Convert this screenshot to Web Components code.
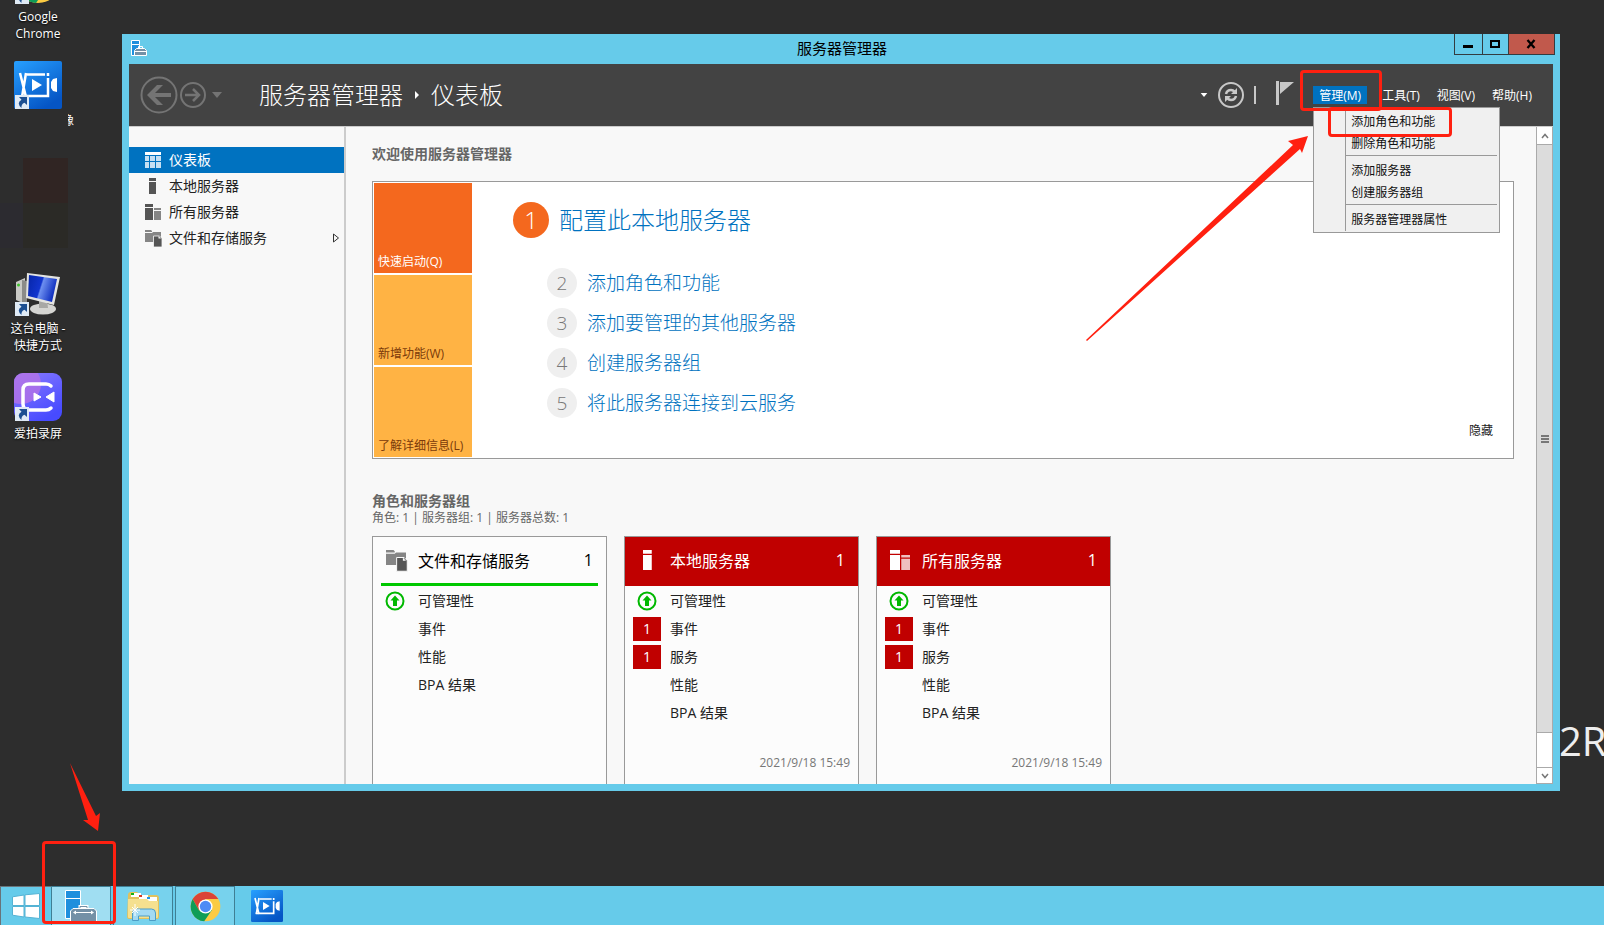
<!DOCTYPE html>
<html lang="zh-CN">
<head>
<meta charset="utf-8">
<title>服务器管理器</title>
<style>
  html, body {
    height: 100%;
    margin: 0;
    overflow: hidden;
  }
  body {
    --frame: #66cbea;
    --accent: #0072c0;
    --alert: #c00000;
    --mark: #ff2010;
    background: #2d2d2d;
    color: #222;
    font-family: "Open Sans", "Noto Sans CJK SC", sans-serif;
    font-size: 12px;
  }
</style>
</head>
<body>
<desk-top>
  <desktop-patch style="left: 23px; top: 158px; background: #302523"></desktop-patch>
  <desktop-patch style="left: 23px; top: 203px; background: #2b2a26"></desktop-patch>
  <desktop-patch style="left: -22px; top: 203px; background: #2c2b30"></desktop-patch>

  <desktop-shortcut icon="chrome" style="top: -44px">Google<br>Chrome</desktop-shortcut>
  <desktop-shortcut icon="recorder" style="top: 61px"></desktop-shortcut>
  <clipped-label style="left: 68px; top: 113px">像</clipped-label>
  <desktop-shortcut icon="computer" style="top: 268px">这台电脑 -<br>快捷方式</desktop-shortcut>
  <desktop-shortcut icon="aipai" style="top: 373px">爱拍录屏</desktop-shortcut>
  <desktop-brand>2R</desktop-brand>

  <app-window heading="服务器管理器">
    <manager-header slot="header" app="服务器管理器" page="仪表板"></manager-header>
    <nav-list slot="nav">
      <nav-item icon="dashboard" active>仪表板</nav-item>
      <nav-item icon="server">本地服务器</nav-item>
      <nav-item icon="servers">所有服务器</nav-item>
      <nav-item icon="files" more>文件和存储服务</nav-item>
    </nav-list>
    <dash-board>
      <welcome-panel></welcome-panel>
      <server-tile slot="tiles" icon="files" heading="文件和存储服务" count="1">
        <status-row ok>可管理性</status-row>
        <status-row>事件</status-row>
        <status-row>性能</status-row>
        <status-row>BPA 结果</status-row>
      </server-tile>
      <server-tile slot="tiles" icon="server" heading="本地服务器" count="1" time="2021/9/18 15:49" alert>
        <status-row ok>可管理性</status-row>
        <status-row count="1">事件</status-row>
        <status-row count="1">服务</status-row>
        <status-row>性能</status-row>
        <status-row>BPA 结果</status-row>
      </server-tile>
      <server-tile slot="tiles" icon="servers" heading="所有服务器" count="1" time="2021/9/18 15:49" alert>
        <status-row ok>可管理性</status-row>
        <status-row count="1">事件</status-row>
        <status-row count="1">服务</status-row>
        <status-row>性能</status-row>
        <status-row>BPA 结果</status-row>
      </server-tile>
    </dash-board>
  </app-window>

  <mark-box style="right: 222px; top: 70px; width: 82px; height: 41px"></mark-box>
  <mark-box style="right: 152px; top: 107px; width: 124px; height: 30px"></mark-box>
  <mark-arrow kind="up" style="right: 296px; top: 136px"></mark-arrow>

  <task-bar slot="taskbar"></task-bar>
  <mark-box style="left: 42px; bottom: 1px; width: 74px; height: 83px"></mark-box>
  <mark-arrow kind="down" style="left: 70px; bottom: 94px"></mark-arrow>
</desk-top>

<script>
const icons = {
  manager: ['0 0 32 32', `
    <path fill="#1f8fdd" stroke="#fff" d="M.5.5h15v8H.5zM.5 8.500h15v20H.5z"/>
    <path fill="none" stroke="#fff" stroke-width="3" d="M15 19v-2.500h7V19"/>
    <path fill="none" stroke="#7490a6" d="M15 19v-2.500h7V19"/>
    <path fill="#7490a6" stroke="#fff" d="M8 18.500h21l2.500 2.500v10.500h-26V21z"/>
    <path stroke="#fff" d="M9 22.500h19"/>
    <path fill="#fff" d="M8 22.500l3-2v4zM29 22.500l-3-2v4z"/>`],
  managerSmall: ['0 0 16 16', `
    <path fill="#1f8fdd" stroke="#fff" d="M.5.5h8v4h-8zM.5 4.500h8v11h-8z"/>
    <path fill="none" stroke="#fff" d="M7.500 8V6.500h4V8"/>
    <path fill="#7490a6" stroke="#fff" d="M5.500 8.500h8l2 2v5h-12v-5z"/>
    <path stroke="#fff" d="M4 11.500h11"/>`],
  dashboard: ['0 0 16 16', `
    <path fill="#fff" d="M0 0h16v3H0z"/>
    <path fill="#c6e0f3" d="M0 4h4v5H0zM5 4h5v5H5zM11 4h5v5h-5zM0 10h4v6H0zM5 10h5v6H5zM11 10h5v6h-5z"/>`],
  server: ['0 0 16 16', `<path fill="var(--ink, #555)" d="M4 0h7v3H4zM4 4h7v12H4z"/>`],
  servers: ['0 0 16 16', `
    <path fill="var(--ink, #555)" d="M0 0h8v3H0zM0 4h8v12H0z"/>
    <path fill="var(--ink, #858585)" opacity="var(--dim, 1)" d="M9 4h7v2H9zM9 7h7v9H9z"/>`],
  files: ['0 0 16 16', `
    <path fill="#858585" d="M0 0h6l1 1v1H0zM0 3h7l1-1h8v10H0z"/>
    <path fill="#555" stroke="#f8f8f8" stroke-width=".8" d="M8.500 6h6L17 8.500V17H8.500z"/>
    <path fill="#f8f8f8" d="M13.500 6v2.500H16z"/>`],
  chrome: ['0 0 48 48', `
    <circle cx="24" cy="24" r="23" fill="#fbcb43"/>
    <path fill="#db4437" d="M4.100 12.500A23 23 0 0 1 43.900 12.500H24L14 30z"/>
    <path fill="#0f9d58" d="M4.100 12.500A23 23 0 0 0 22 47L34 29.500 14 30z"/>
    <circle cx="24" cy="24" r="11" fill="#fff"/>
    <circle cx="24" cy="24" r="8.800" fill="#4c8bf5"/>`],
  recorder: ['0 0 48 48', `
    <defs><linearGradient id="g" x2=".6" y2="1">
      <stop stop-color="#27a0ff"/><stop offset="1" stop-color="#0555c5"/>
    </linearGradient></defs>
    <rect width="48" height="48" rx="2" fill="url(#g)"/>
    <path fill="none" stroke="#fff" stroke-width="2.500" d="M13 13.500h18M34 17v18H7M34 12v3"/>
    <path fill="none" stroke="#fff" stroke-width="2.500" d="M6 12l6 24M12 12L8 36"/>
    <path fill="#fff" d="M18 18l10 6-10 6zM37 21l2-3 4-1v14l-4-1-2-3z"/>`],
  aipai: ['0 0 48 48', `
    <defs><linearGradient id="a" x2=".6" y2="1">
      <stop stop-color="#8c7cff"/><stop offset="1" stop-color="#474bff"/>
    </linearGradient>
    <clipPath id="c"><rect width="48" height="48" rx="9"/></clipPath></defs>
    <g clip-path="url(#c)">
      <path fill="url(#a)" d="M0 0h48v48H0z"/>
      <circle cx="7" cy="11" r="20" fill="#b873e6" opacity=".75"/>
    </g>
    <path fill="none" stroke="#fff" stroke-width="3.500" stroke-linecap="round"
      d="M37 13Q35 11 32 11H15Q9 11 9 17v14Q9 37 15 37h17Q35 37 37 35"/>
    <path fill="#fff" stroke="#fff" stroke-linejoin="round" d="M20 20l7 4-7 4zM40 19v10l-8-5z"/>`],
  computer: ['0 0 48 48', `
    <defs><linearGradient id="s" x2="1" y2=".3">
      <stop stop-color="#0626a8"/><stop offset=".5" stop-color="#1235cf"/>
      <stop offset=".55" stop-color="#6d8ff0"/><stop offset="1" stop-color="#1030c0"/>
    </linearGradient></defs>
    <path fill="#c9c9c5" d="M2 14l9-4v26l-9-4z"/>
    <path fill="#8b8b88" d="M8 12l5 1v24l-5-2z"/>
    <circle cx="4.500" cy="17" r="1.500" fill="#3ec22e"/>
    <ellipse cx="29" cy="41" rx="13" ry="5.500" fill="#d5d5d2"/>
    <path fill="#a8a8a5" d="M25 31h8l1 9h-9z"/>
    <path fill="#e4e4e1" d="M13 5l33 4-6 28-28-7z"/>
    <path fill="url(#s)" d="M15 7l28 4-5 23-24-6z"/>`],
  shortcut: ['0 0 14 14', `
    <path fill="#dfeaf5" d="M0 0h14v14H0z"/>
    <path fill="#1c4f91" d="M4 2h8v8L9.500 7.800Q6 9 6.500 13 1 8 6.500 4.800z"/>`],
  explorer: ['0 0 34 30', `
    <path fill="#e2c25c" d="M2 4q0-3 3-3h6l3 3h16q3 0 3 3v19q0 2-2 2H3q-2 0-2-2z"/>
    <path fill="#fff" d="M5 2h10v4H5zM13 4h9v4h-9zM21 6h10v4H21z"/>
    <path fill="#12b312" d="M5 2h3v2H5z"/><path fill="#d63b25" d="M13 4h3v2h-3z"/>
    <path fill="#2196e8" d="M21 6h3v2h-3z"/>
    <path fill="#f5e08f" d="M2 8h19l2 2h9v16q0 1-1 1H3q-1 0-1-1z"/>
    <path fill="#a3daf2" stroke="#4c9dc6" d="M6.500 29.500V22q0-4 4-4h15q4 0 4 4v7.500h-6V25h-11v4.500z"/>
    <path stroke="#fff" d="M9 13v12M4 19h10M6 16l6 6M12 16l-6 6"/>`],
  start: ['0 0 28 26', `
    <path fill="#fff" stroke="#54b3d4" d="M.5 3.800L12 2v10.500H.5zM13 1.800L27.500.5v12H13zM.5 13.500H12V24L.5 22.200zM13 13.500h14.500v12L13 24z"/>`],
  back: ['0 0 38 38', `
    <circle cx="19" cy="19" r="17.500" fill="none" stroke="#747474" stroke-width="2"/>
    <path fill="#747474" d="M7 19l10-10h6l-8 8h16v4H15l8 8h-6z"/>`],
  forward: ['0 0 26 26', `
    <circle cx="13" cy="13" r="12" fill="none" stroke="#747474" stroke-width="2"/>
    <path fill="none" stroke="#747474" stroke-width="2.500" d="M5 13h14M13 7l6 6-6 6"/>`],
  refresh: ['0 0 26 26', `
    <circle cx="13" cy="13" r="12" fill="none" stroke="#c8c8c8" stroke-width="2"/>
    <path fill="none" stroke="#c8c8c8" stroke-width="2.500" d="M8 12q1-4 5-4 2 0 4 2M18 14q-1 4-5 4-2 0-4-2"/>
    <path fill="#c8c8c8" d="M19 6v6h-6zM7 20v-6h6z"/>`],
  flag: ['0 0 18 24', `<path fill="#c8c8c8" d="M0 0h3v24H0zM4 1h14L4 13z"/>`],
  down: ['0 0 10 6', `<path fill="currentColor" d="M0 0h10L5 6z"/>`],
  right: ['0 0 4 8', `<path fill="#fff" d="M0 0l4 4-4 4z"/>`],
  expand: ['0 0 8 10', `<path fill="none" stroke="#333" d="M1.500 1l5 4-5 4z"/>`],
  chevronUp: ['0 0 8 6', `<path fill="none" stroke="#777" stroke-width="1.500" d="M1 5l3-3.500L7 5"/>`],
  chevronDown: ['0 0 8 6', `<path fill="none" stroke="#777" stroke-width="1.500" d="M1 1l3 3.500L7 1"/>`],
  ok: ['0 0 20 20', `
    <circle cx="10" cy="10" r="8.500" fill="none" stroke="#00b800" stroke-width="2"/>
    <path fill="#00b800" d="M10 4.500l4.500 5H12V15H8V9.500H5.500z"/>`],
  minimize: ['0 0 10 10', `<path d="M0 6h10v3H0z"/>`],
  maximize: ['0 0 10 10', `<path fill="none" stroke="#000" stroke-width="2" d="M1 2h8v6H1z"/>`],
  close: ['0 0 10 10', `<path fill="none" stroke="#000" stroke-width="2.300" d="M1.500 1l7 8M8.500 1l-7 8"/>`],
};

// Shared base: puts the markup of each element in an open shadow root.
class BaseElement extends HTMLElement {
  constructor() {
    super();
    this.attachShadow({ mode: 'open' });
  }

  connectedCallback() {
    const template = document.createElement('template');
    template.innerHTML = `
      <style>
        :host, * { box-sizing: border-box; }
        button, a { font: inherit; color: inherit; text-decoration: none; }
        button { border: 0; padding: 0; background: none; }
        :focus-visible { outline: 1px dotted; }
      </style>
      ${this.render()}
    `;
    this.shadowRoot.replaceChildren(template.content.cloneNode(true));
  }

  attr(name) {
    return this.getAttribute(name) || '';
  }
}

/** An inline SVG picture, chosen by name. */
class UiIcon extends BaseElement {
  render() {
    const [viewBox, shapes] = icons[this.attr('name')];
    return `
      <style>
        :host { display: block; flex: none; width: 16px; height: 16px; }
        svg { display: block; width: 100%; height: 100%; overflow: visible; }
      </style>
      <svg viewBox="${viewBox}" aria-hidden="true">${shapes}</svg>
    `;
  }
}

class DeskTop extends BaseElement {
  render() {
    return `
      <style>
        :host {
          position: relative;
          display: flex;
          flex-direction: column;
          height: 100vh;
          overflow: hidden;
        }
        main { flex: 1; min-height: 0; }
      </style>
      <main><slot></slot></main>
      <slot name="taskbar"></slot>
    `;
  }
}

class DesktopPatch extends BaseElement {
  render() {
    return `<style>:host { position: absolute; width: 45px; height: 45px; }</style>`;
  }
}

class DesktopShortcut extends BaseElement {
  render() {
    return `
      <style>
        :host {
          position: absolute;
          left: 0;
          width: 76px;
          color: #fff;
          line-height: 17px;
          text-align: center;
          text-shadow: 0 1px 2px #000;
        }
        a { display: flex; flex-direction: column; align-items: center; gap: 4px; }
        .picture { position: relative; }
        .big { width: 48px; height: 48px; }
        .arrow { position: absolute; left: 1px; bottom: 0; width: 14px; height: 14px; }
      </style>
      <a href="#">
        <span class="picture">
          <ui-icon class="big" name="${this.attr('icon')}"></ui-icon>
          <ui-icon class="arrow" name="shortcut"></ui-icon>
        </span>
        <span><slot></slot></span>
      </a>
    `;
  }
}

/** The tail end of a label whose start is hidden. */
class ClippedLabel extends BaseElement {
  render() {
    return `
      <style>
        :host {
          position: absolute;
          display: flex;
          justify-content: flex-end;
          width: 6px;
          overflow: hidden;
          color: #fff;
          line-height: 16px;
        }
      </style>
      <slot></slot>
    `;
  }
}

class DesktopBrand extends BaseElement {
  render() {
    return `
      <style>
        :host {
          position: absolute;
          left: calc(100% - 45px);
          bottom: 160px;
          color: #eee;
          font-size: 40px;
          line-height: 48px;
          white-space: nowrap;
        }
      </style>
      <slot></slot>
    `;
  }
}

class AppWindow extends BaseElement {
  render() {
    return `
      <style>
        :host {
          position: absolute;
          inset: 34px 44px 134px 122px;
          display: flex;
          flex-direction: column;
          padding: 0 7px 7px;
          background: var(--frame);
        }
        header { display: flex; justify-content: space-between; height: 30px; }
        header > * { flex: 1; }
        header ui-icon { margin: 6px 2px; }
        h1 {
          margin: 0;
          color: #000;
          font-size: 15px;
          font-weight: 400;
          line-height: 28px;
          text-align: center;
        }
        .controls { display: flex; justify-content: flex-end; align-items: flex-start; margin-right: -2px; }
        .controls button {
          display: grid;
          place-items: center;
          width: 28px;
          height: 21px;
          border: solid #333c40;
          border-width: 0 0 1px 1px;
        }
        .controls .max { width: 26px; }
        .controls .close { width: 47px; border-right-width: 1px; background: #c1594c; }
        .controls ui-icon { width: 10px; height: 10px; margin: 0; }
        .body { display: flex; flex: 1; min-height: 0; border-top: 1px solid #ccc; background: #f8f8f8; }
        .content { flex: 1; min-width: 0; display: flex; }
        .scroll {
          display: flex;
          flex-direction: column;
          width: 17px;
          border: solid #aaa;
          border-width: 0 1px;
          background: #fff;
        }
        .scroll button { display: grid; place-items: center; height: 17px; }
        .scroll ui-icon { width: 8px; height: 6px; }
        .down { border-top: 1px solid #aaa; border-bottom: 1px solid #aaa; }
        .track { flex: 1; padding-bottom: 34px; }
        .thumb {
          display: grid;
          place-items: center;
          height: 100%;
          border: solid #aaa;
          border-width: 1px 0;
          background: #dcdcdc;
        }
        .grip { width: 8px; height: 8px; background: repeating-linear-gradient(#777 0 2px, #dcdcdc 2px 3px); }
      </style>
      <header>
        <div><ui-icon name="managerSmall"></ui-icon></div>
        <h1>${this.attr('heading')}</h1>
        <div class="controls">
          <button aria-label="最小化"><ui-icon name="minimize"></ui-icon></button>
          <button class="max" aria-label="最大化"><ui-icon name="maximize"></ui-icon></button>
          <button class="close" aria-label="关闭"><ui-icon name="close"></ui-icon></button>
        </div>
      </header>
      <slot name="header"></slot>
      <div class="body">
        <slot name="nav"></slot>
        <div class="content"><slot></slot></div>
        <div class="scroll">
          <button aria-label="向上滚动"><ui-icon name="chevronUp"></ui-icon></button>
          <div class="track"><div class="thumb"><div class="grip"></div></div></div>
          <button class="down" aria-label="向下滚动"><ui-icon name="chevronDown"></ui-icon></button>
        </div>
      </div>
    `;
  }
}

class ManagerHeader extends BaseElement {
  render() {
    return `
      <style>
        :host {
          display: flex;
          align-items: center;
          justify-content: space-between;
          height: 62px;
          padding: 0 15px 0 11px;
          background: #434343;
          color: #fff;
        }
        .history, .path, .tools, nav { display: flex; align-items: center; }
        .history { gap: 2px; color: #747474; }
        .back { width: 38px; height: 38px; }
        .ring { width: 26px; height: 26px; }
        .history .arrow { width: 10px; height: 6px; margin-left: 4px; }
        .path {
          flex: 1;
          gap: 12px;
          margin-left: 37px;
          font-size: 24px;
          font-weight: 300;
          line-height: 32px;
        }
        .path ui-icon { width: 4px; height: 8px; }
        .tools .arrow { width: 8px; height: 4px; margin-right: 10px; }
        .bar { width: 2px; height: 18px; margin: 0 20px 0 10px; background: #c8c8c8; }
        .flag { width: 18px; height: 24px; margin: 0 19px 4px 0; }
        nav { gap: 5px; }
        .entry { position: relative; margin-right: 4px; }
        nav button { display: block; padding: 2px 6px 0; line-height: 16px; }
        .open { background: var(--accent); }
        drop-menu { position: absolute; top: 21px; left: 0; z-index: 1; }
      </style>
      <div class="history">
        <button aria-label="后退"><ui-icon class="back" name="back"></ui-icon></button>
        <button aria-label="前进"><ui-icon class="ring" name="forward"></ui-icon></button>
        <ui-icon class="arrow" name="down"></ui-icon>
      </div>
      <div class="path">
        <span>${this.attr('app')}</span>
        <ui-icon name="right"></ui-icon>
        <span>${this.attr('page')}</span>
      </div>
      <div class="tools">
        <ui-icon class="arrow" name="down"></ui-icon>
        <button aria-label="刷新"><ui-icon class="ring" name="refresh"></ui-icon></button>
        <span class="bar"></span>
        <button aria-label="通知"><ui-icon class="flag" name="flag"></ui-icon></button>
        <nav>
          <div class="entry">
            <button class="open" aria-expanded="true">管理(M)</button>
            <drop-menu></drop-menu>
          </div>
          <button>工具(T)</button>
          <button>视图(V)</button>
          <button>帮助(H)</button>
        </nav>
      </div>
    `;
  }
}

class DropMenu extends BaseElement {
  render() {
    return `
      <style>
        :host {
          display: block;
          width: 187px;
          padding: 3px 2px 1px 31px;
          border: 1px solid #999;
          background: #f0f0f0;
          color: #111;
        }
        div { border-left: 1px solid #999; }
        button { display: block; width: 100%; padding-left: 5px; line-height: 22px; text-align: left; }
        hr { margin: 0 0 4px; border: 0; border-top: 1px solid #999; }
      </style>
      <div role="menu">
        <button role="menuitem">添加角色和功能</button>
        <button role="menuitem">删除角色和功能</button>
        <hr>
        <button role="menuitem">添加服务器</button>
        <button role="menuitem">创建服务器组</button>
        <hr>
        <button role="menuitem">服务器管理器属性</button>
      </div>
    `;
  }
}

class NavList extends BaseElement {
  render() {
    return `
      <style>
        :host { display: block; width: 217px; padding-top: 20px; border-right: 2px solid #ccc; }
      </style>
      <nav><slot></slot></nav>
    `;
  }
}

class NavItem extends BaseElement {
  render() {
    const more = this.hasAttribute('more') ? '<ui-icon class="more" name="expand"></ui-icon>' : '';
    return `
      <style>
        :host { display: block; font-size: 14px; line-height: 26px; }
        :host([active]) { background: var(--accent); color: #fff; }
        a { display: flex; align-items: center; gap: 8px; padding: 0 4px 0 16px; }
        .more { width: 8px; height: 10px; margin-left: auto; }
      </style>
      <a href="#"><ui-icon name="${this.attr('icon')}"></ui-icon><slot></slot>${more}</a>
    `;
  }
}

class DashBoard extends BaseElement {
  render() {
    return `
      <style>
        :host {
          display: flex;
          flex-direction: column;
          flex: 1;
          min-width: 0;
          padding: 17px 22px 0 26px;
          overflow: hidden;
          color: #666;
        }
        h2 { margin: 0; font-size: 14px; font-weight: 700; line-height: 20px; }
        .welcome { margin-bottom: 17px; }
        .groups { margin-top: 32px; }
        p { margin: 0 0 11px; line-height: 14px; }
        .tiles { display: flex; flex: 1; gap: 17px; }
      </style>
      <h2 class="welcome">欢迎使用服务器管理器</h2>
      <slot></slot>
      <h2 class="groups">角色和服务器组</h2>
      <p>角色: 1 | 服务器组: 1 | 服务器总数: 1</p>
      <div class="tiles"><slot name="tiles"></slot></div>
    `;
  }
}

class WelcomePanel extends BaseElement {
  render() {
    return `
      <style>
        :host {
          display: flex;
          flex: none;
          padding: 1px;
          border: 1px solid #999;
          background: #fff;
        }
        .tabs { display: flex; flex-direction: column; gap: 2px; }
        .tabs button {
          display: flex;
          align-items: flex-end;
          width: 98px;
          height: 90px;
          padding: 0 4px 3px;
          background: #ffb344;
          color: #7a3a0a;
          line-height: 16px;
          white-space: nowrap;
        }
        .tabs .on { background: #f4681e; color: #fff; }
        .steps { flex: 1; padding: 19px 0 0 41px; font-weight: 300; }
        a { display: flex; align-items: center; gap: 10px; color: var(--accent); }
        b {
          display: grid;
          place-items: center;
          width: 30px;
          height: 30px;
          border-radius: 50%;
          background: #efefef;
          color: #777;
          font-weight: 300;
        }
        .first { font-size: 24px; line-height: 36px; }
        .first b { width: 36px; height: 36px; background: #f4681e; color: #fff; }
        ol {
          display: grid;
          gap: 10px;
          margin: 30px 0 0;
          padding: 0 0 0 34px;
          font-size: 19px;
          line-height: 30px;
          list-style: none;
        }
        .hide { align-self: flex-end; margin: 0 19px 18px; color: #222; line-height: 16px; }
      </style>
      <div class="tabs">
        <button class="on">快速启动(Q)</button>
        <button>新增功能(W)</button>
        <button>了解详细信息(L)</button>
      </div>
      <div class="steps">
        <a class="first" href="#"><b>1</b>配置此本地服务器</a>
        <ol>
          <li><a href="#"><b>2</b>添加角色和功能</a></li>
          <li><a href="#"><b>3</b>添加要管理的其他服务器</a></li>
          <li><a href="#"><b>4</b>创建服务器组</a></li>
          <li><a href="#"><b>5</b>将此服务器连接到云服务</a></li>
        </ol>
      </div>
      <button class="hide">隐藏</button>
    `;
  }
}

/**
 * A role or server group with its status rows.
 *
 * @property {string} heading - The name of the group.
 * @property {string} count - The number of servers in it.
 * @property {boolean} alert - Paints the heading red.
 */
class ServerTile extends BaseElement {
  render() {
    const time = this.attr('time') ? `<time>${this.attr('time')}</time>` : '';
    return `
      <style>
        :host {
          display: block;
          width: 235px;
          border: 1px solid #999;
          border-bottom: 0;
          background: #fcfcfc;
          color: #222;
        }
        h3 {
          display: flex;
          align-items: center;
          height: 49px;
          margin: 0 8px 1px;
          padding: 0 5px;
          border-bottom: 3px solid #00c800;
          color: #000;
          font-size: 16px;
          font-weight: 400;
        }
        :host([alert]) h3 {
          --ink: #fff;
          --dim: .75;
          margin: 0 0 1px;
          padding: 0 13px;
          border-color: var(--alert);
          background: var(--alert);
          color: #fff;
        }
        ui-icon { width: 20px; height: 20px; margin-right: 12px; }
        .count { margin-left: auto; }
        time { display: block; padding: 27px 8px 0; color: #777; line-height: 18px; text-align: right; }
      </style>
      <h3>
        <ui-icon name="${this.attr('icon')}"></ui-icon>
        <span>${this.attr('heading')}</span>
        <span class="count">${this.attr('count')}</span>
      </h3>
      <slot></slot>
      ${time}
    `;
  }
}

class StatusRow extends BaseElement {
  render() {
    let badge = '<span></span>';
    if (this.hasAttribute('ok')) badge = '<ui-icon name="ok"></ui-icon>';
    if (this.hasAttribute('count')) badge = `<span class="badge">${this.attr('count')}</span>`;
    return `
      <style>
        :host {
          display: grid;
          grid-template-columns: 28px 1fr;
          align-items: center;
          gap: 9px;
          height: 28px;
          padding-left: 8px;
          font-size: 14px;
        }
        ui-icon { width: 20px; height: 20px; margin-left: 4px; }
        .badge { background: var(--alert); color: #fff; line-height: 24px; text-align: center; }
        .label { padding-bottom: 2px; }
      </style>
      ${badge}
      <span class="label"><slot></slot></span>
    `;
  }
}

class TaskBar extends BaseElement {
  render() {
    return `
      <style>
        :host { display: flex; height: 39px; background: var(--frame); }
        button {
          display: grid;
          place-items: center;
          width: 60px;
          margin-right: 2px;
          border: 1px solid #3f7f94;
          border-bottom: 0;
          background: #77d2ed;
        }
        .start { width: 51px; margin: 0; border-color: #68747a; border-right: 0; background: none; }
        .active { background: #a0def2; }
        .plain { border-color: transparent; background: none; }
        .logo { width: 28px; height: 26px; }
        .app { width: 32px; height: 32px; }
        .files { width: 34px; height: 30px; }
        .web { width: 31px; height: 31px; }
      </style>
      <button class="start" aria-label="开始"><ui-icon class="logo" name="start"></ui-icon></button>
      <button class="active" aria-label="服务器管理器"><ui-icon class="app" name="manager"></ui-icon></button>
      <button aria-label="文件资源管理器"><ui-icon class="files" name="explorer"></ui-icon></button>
      <button aria-label="Google Chrome"><ui-icon class="web" name="chrome"></ui-icon></button>
      <button class="plain" aria-label="录屏"><ui-icon class="app" name="recorder"></ui-icon></button>
    `;
  }
}

class MarkBox extends BaseElement {
  render() {
    return `
      <style>
        :host {
          position: absolute;
          z-index: 2;
          border: 3px solid var(--mark);
          border-radius: 4px;
          pointer-events: none;
        }
      </style>
    `;
  }
}

const arrows = {
  up: [222, 205, 'M0 204L207 9 202 5 222 0 216 17 214 13 1 205z'],
  down: [31, 68, 'M0 0L26 53 30 50 28 68 13 57 18 57z'],
};

class MarkArrow extends BaseElement {
  render() {
    const [width, height, shape] = arrows[this.attr('kind')];
    return `
      <style>
        :host { position: absolute; z-index: 2; pointer-events: none; }
        svg { display: block; fill: var(--mark); }
      </style>
      <svg width="${width}" height="${height}"><path d="${shape}"/></svg>
    `;
  }
}

customElements.define('ui-icon', UiIcon);
customElements.define('desk-top', DeskTop);
customElements.define('desktop-patch', DesktopPatch);
customElements.define('desktop-shortcut', DesktopShortcut);
customElements.define('clipped-label', ClippedLabel);
customElements.define('desktop-brand', DesktopBrand);
customElements.define('app-window', AppWindow);
customElements.define('manager-header', ManagerHeader);
customElements.define('drop-menu', DropMenu);
customElements.define('nav-list', NavList);
customElements.define('nav-item', NavItem);
customElements.define('dash-board', DashBoard);
customElements.define('welcome-panel', WelcomePanel);
customElements.define('server-tile', ServerTile);
customElements.define('status-row', StatusRow);
customElements.define('task-bar', TaskBar);
customElements.define('mark-box', MarkBox);
customElements.define('mark-arrow', MarkArrow);
</script>
</body>
</html>
